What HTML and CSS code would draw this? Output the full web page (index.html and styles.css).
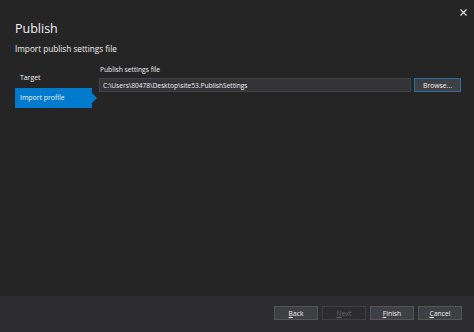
FILE: index.html
```
<!DOCTYPE html>
<html lang="en">
<head>
    <meta charset="UTF-8">
    <meta name="viewport" content="width=device-width, initial-scale=1.0">
    <title>Publish</title>
    <link rel="stylesheet" href="styles.css">
</head>
<body>
    <div class="dialog">
        <div class="titlebar">
            <button class="close" title="Close">
                <svg width="7" height="7" viewBox="0 0 7 7"><path d="M0.5 0.5 L6.5 6.5 M6.5 0.5 L0.5 6.5" stroke="#e8e8e8" stroke-width="1.2"/></svg>
            </button>
        </div>
        <div class="header">
            <h1>Publish</h1>
            <p>Import publish settings file</p>
        </div>
        <div class="main">
            <div class="sidebar">
                <div class="nav-item">Target</div>
                <div class="nav-item active">Import profile</div>
            </div>
            <div class="content">
                <label class="field-label">Publish settings file</label>
                <div class="field-row">
                    <input class="path-input" type="text" value="C:\Users\80478\Desktop\site53.PublishSettings">
                    <button class="btn browse">Browse...</button>
                </div>
            </div>
        </div>
        <div class="footer">
            <button class="btn"><u>B</u>ack</button>
            <button class="btn" disabled><u>N</u>ext</button>
            <button class="btn"><u>F</u>inish</button>
            <button class="btn"><u>C</u>ancel</button>
        </div>
    </div>
</body>
</html>
```

FILE: styles.css
```
body {
    margin: 0;
    padding: 0;
    background-color: #252526;
    color: #f1f1f1;
    font-family: "Open Sans", "Noto Sans", sans-serif;
}

.dialog {
    display: flex;
    flex-direction: column;
    height: 100vh;
}

.titlebar {
    height: 21px;
    display: flex;
    justify-content: flex-end;
    align-items: flex-start;
    padding-right: 7px;
}

.close {
    background: none;
    border: none;
    padding: 0;
    margin-top: 9px;
    width: 7px;
    height: 7px;
    display: flex;
}

.header {
    padding-left: 15px;
}

.header h1 {
    margin: 0;
    font-size: 12.5px;
    line-height: 16px;
    font-weight: 400;
}

.header p {
    margin: 6px 0 0 0;
    font-size: 8.2px;
    line-height: 11px;
}

.main {
    flex: 1;
    display: flex;
    margin-top: 11px;
}

.sidebar {
    width: 77px;
    margin-left: 15px;
    padding-top: 3px;
}

.nav-item {
    position: relative;
    height: 20px;
    line-height: 20px;
    padding-left: 5px;
    font-size: 6.9px;
}

.nav-item.active {
    background-color: #007acc;
}

/* little arrow on the right of the selected step */
.nav-item.active::after {
    content: "";
    position: absolute;
    right: -5px;
    top: 5px;
    border-top: 5px solid transparent;
    border-bottom: 5px solid transparent;
    border-left: 5px solid #007acc;
}

.content {
    flex: 1;
    margin-left: 7px;
    margin-right: 13px;
    display: flex;
    flex-direction: column;
}

.field-label {
    font-size: 6.7px;
    line-height: 10px;
    padding-left: 1px;
}

.field-row {
    display: flex;
    gap: 3px;
    margin-top: 3px;
}

.path-input {
    flex: 1;
    height: 14px;
    box-sizing: border-box;
    background-color: #333337;
    border: 1px solid #434346;
    color: #f1f1f1;
    font-family: inherit;
    font-size: 6.6px;
    padding: 0 3px;
    outline: none;
}

.btn {
    width: 44px;
    height: 14px;
    box-sizing: border-box;
    background-color: #3f3f46;
    border: 1px solid #555558;
    color: #f1f1f1;
    font-family: inherit;
    font-size: 6.8px;
    padding: 0;
}

.btn:disabled {
    background-color: #2d2d30;
    border-color: #3f3f46;
    color: #656565;
}

.browse {
    width: 47px;
    border-color: #2b6ca3;
}

.footer {
    height: 36px;
    box-sizing: border-box;
    background-color: #2d2d30;
    display: flex;
    justify-content: flex-end;
    gap: 4px;
    padding: 10px 12px 0 0;
}
```
